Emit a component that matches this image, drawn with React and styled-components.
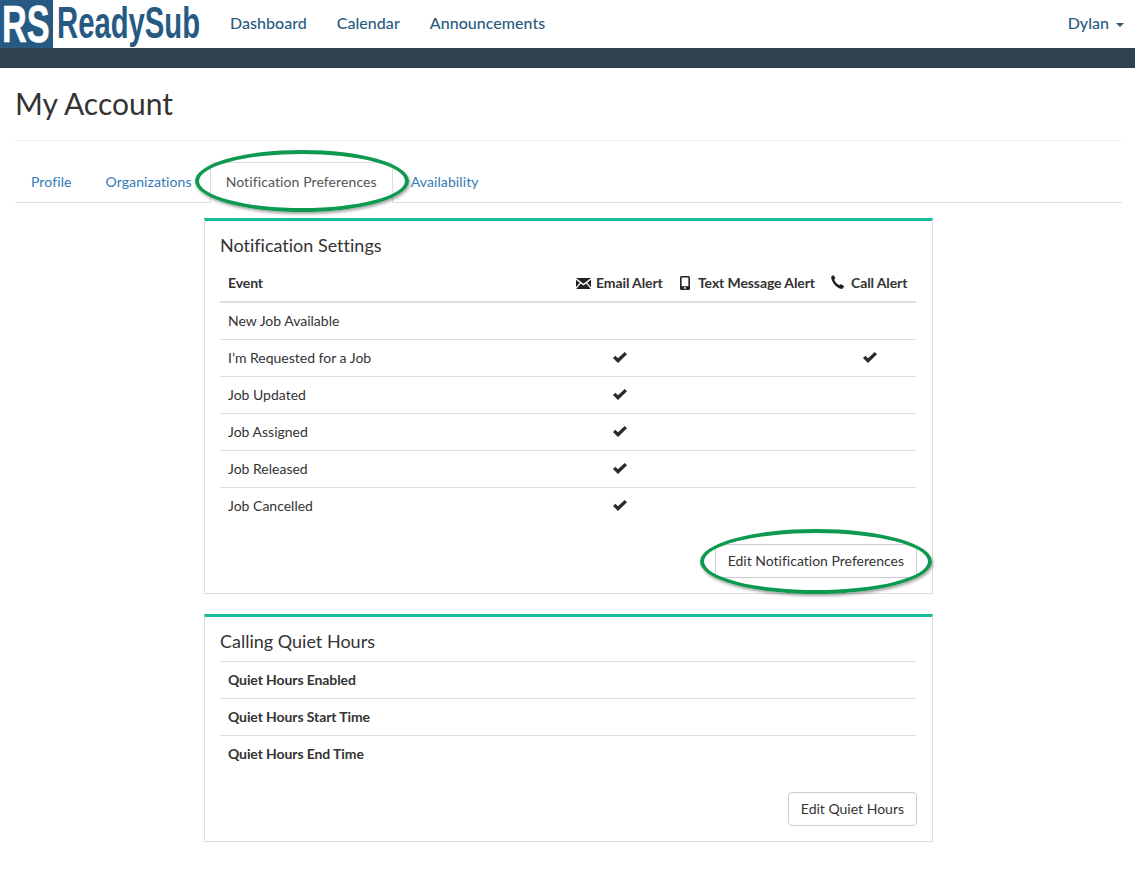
import React from "react";
import styled, { createGlobalStyle } from "styled-components";

const Global = createGlobalStyle`
  html, body { margin: 0; padding: 0; background: #fff; }
  body { font-family: Lato, "Open Sans", sans-serif; font-size: 14px; line-height: 20px; color: #333; font-variant-ligatures: none; }
  * { box-sizing: border-box; }
`;

const Nav = styled.nav`
  height: 48px; background: #fff; display: flex; align-items: center; padding-right: 11px;
`;
const Brand = styled.div`
  display: flex; height: 48px; flex: 0 0 230px; align-items: stretch;
`;
const BrandBox = styled.div`
  flex: 0 0 53px; height: 48px; background: #275a82; display: flex; align-items: center; justify-content: flex-start;
`;
const BrandInitials = styled.span`
  flex: none; margin: 0 -22px 0 2px; font-family: "Liberation Sans", sans-serif; font-weight: 700; white-space: nowrap;
  font-size: 52px; line-height: 48px; color: #fff; -webkit-text-stroke: 0.6px #fff; transform: scaleX(0.66); transform-origin: left center;
`;
const BrandName = styled.span`
  display: block; flex: none; margin: 0 -72px 0 4px; font-family: "Liberation Sans", sans-serif; font-weight: 700; white-space: nowrap;
  font-size: 44px; line-height: 46px; color: #275a82; transform: scaleX(0.665); transform-origin: left center;
`;
const NavLinks = styled.div`
  display: flex; gap: 30px; flex: 1;
`;
const NavLink = styled.a`
  font-size: 16px; font-weight: 500; color: #2a5b7f; line-height: 44px; padding-bottom: 2px; letter-spacing: 0.03px;
`;
const Caret = styled.span`
  display: inline-block; width: 0; height: 0; margin-left: 7px; vertical-align: middle;
  border-top: 4px solid #2a5b7f; border-left: 4px solid transparent; border-right: 4px solid transparent;
`;
const Strip = styled.div`
  height: 20px; background: #2f4050;
`;
const Main = styled.main`
  padding: 0 13px 0 15px; background: #fff; min-height: 802px;
`;
const Title = styled.h1`
  margin: 0; padding: 19px 0 0; height: 73px; font-size: 30px; line-height: 33px; font-weight: 400; color: #333;
  border-bottom: 1px solid #eee;
`;
const Tabs = styled.ul`
  list-style: none; margin: 21px 0 15px; padding: 0; display: flex; height: 41px; border-bottom: 1px solid #ddd;
  letter-spacing: 0.1px;
`;
const Tab = styled.li`
  margin-right: 2px; height: 41px; padding: 9px 15px 11px; position: relative;
  border: 1px solid ${p => (p.$active ? "#ddd" : "transparent")};
  border-bottom-color: ${p => (p.$active ? "#fff" : "transparent")};
  color: ${p => (p.$active ? "#555" : "#337ab7")};
  border-radius: 4px 4px 0 0; white-space: nowrap;
`;
const Oval = styled.span`
  position: absolute; border: 4px solid #0d9a50; border-radius: 50%;
  box-shadow: 1px 2px 3px rgba(0,0,0,.35); pointer-events: none;
`;
const TabOval = styled(Oval)`
  left: -16px; top: -13px; width: 214px; height: 62px;
`;
const ButtonOval = styled(Oval)`
  left: -16px; top: -16px; width: 232px; height: 65px;
`;
const Column = styled.div`
  width: 729px; margin-left: 189px; display: flex; flex-direction: column; gap: 20px;
`;
const Panel = styled.section`
  border: 1px solid #ddd; border-top: 3px solid #18bc9c; padding: 0 15px; background: #fff;
  height: ${p => p.$h}px;
`;
const PanelTitle = styled.h3`
  margin: 0; padding: ${p => p.$top}px 0 0; height: ${p => p.$h}px; font-size: 18px; line-height: 20px; font-weight: 400; color: #333;
`;
const Table = styled.table`
  width: 696px; border-collapse: collapse; table-layout: fixed;
`;
const Th = styled.th`
  padding: 9px 8px 8px; height: 38px; font-weight: 700; font-size: 14px; text-align: left; white-space: nowrap; border-bottom: 2px solid #ddd;
  letter-spacing: -0.1px;
`;
const Td = styled.td`
  height: 37px; padding: 8px; border-top: ${p => (p.$first ? "0" : "1px solid #ddd")}; text-align: ${p => (p.$center ? "center" : "left")};
  font-weight: ${p => (p.$bold ? 700 : 400)}; letter-spacing: ${p => (p.$bold ? "-0.1px" : "0")}; white-space: nowrap; color: #333;
`;
const Actions = styled.div`
  display: flex; justify-content: flex-end; margin-top: ${p => p.$top}px;
`;
const Button = styled.button`
  position: relative; height: 34px; padding: 6px 12px; font: 400 14px/20px Lato, sans-serif; color: #333; background: #fff;
  border: 1px solid #ccc; border-radius: 4px; white-space: nowrap; font-variant-ligatures: none;
`;
const HeadIcon = styled.svg`
  vertical-align: ${p => p.$drop || -1}px; margin-left: ${p => p.$ml || 0}px; margin-right: ${p => p.$mr}px;
`;
const CheckIcon = styled.svg`
  display: inline-block; vertical-align: 0;
`;

const Mail = () => (
  <HeadIcon $mr={5} width="15" height="11" viewBox="0 0 15 11" fill="#222">
    <path d="M0 0h15L7.500 5.800zM0 1.800v7.400l3.800-4.500zM15 1.800v7.400l-3.800-4.500zM4.800 5.500l2.700 2.100 2.700-2.100 4.600 5.500H.2z" />
  </HeadIcon>
);
const Mobile = () => (
  <HeadIcon $ml={1} $mr={8} $drop={-2} width="10" height="14" viewBox="0 0 10 14" fill="#222">
    <path fillRule="evenodd" d="M1.500 0h7A1.500 1.500 0 0 1 10 1.500v11A1.500 1.500 0 0 1 8.500 14h-7A1.500 1.500 0 0 1 0 12.500v-11A1.500 1.500 0 0 1 1.500 0zm.1 1.600v8.600h6.800V1.600zM4 11.200v1.600h2v-1.600z" />
  </HeadIcon>
);
const Phone = () => (
  <HeadIcon $mr={5} width="15" height="14" viewBox="0 0 15 14" fill="#222">
    <path d="M.6 1.300 2.500 0l2 3.300-1.300 1.100c.8 2.500 2.900 4.700 5.500 5.900l1.200-1.300 3.300 2.200-1.200 2c-.5.600-1.400.9-2.200.6C5.200 12.400 1.700 8.600.3 3.200.1 2.500.2 1.800.6 1.300z" />
  </HeadIcon>
);
const Check = () => (
  <CheckIcon width="14" height="11" viewBox="0 0 14 11" fill="#2b2b2b">
    <path d="M0 6l2.300-2.300L5 6.300 11.700 0 14 2.300 5 11z" />
  </CheckIcon>
);

const events = [
  ["New Job Available", false, false],
  ["I’m Requested for a Job", true, true],
  ["Job Updated", true, false],
  ["Job Assigned", true, false],
  ["Job Released", true, false],
  ["Job Cancelled", true, false],
];
const quiet = ["Quiet Hours Enabled", "Quiet Hours Start Time", "Quiet Hours End Time"];

export default function App() {
  return (
    <>
      <Global />
      <Nav>
        <Brand>
          <BrandBox><BrandInitials>RS</BrandInitials></BrandBox>
          <BrandName>ReadySub</BrandName>
        </Brand>
        <NavLinks>
          <NavLink>Dashboard</NavLink>
          <NavLink>Calendar</NavLink>
          <NavLink>Announcements</NavLink>
        </NavLinks>
        <NavLink>Dylan<Caret /></NavLink>
      </Nav>
      <Strip />
      <Main>
        <Title>My Account</Title>
        <Tabs>
          <Tab>Profile</Tab>
          <Tab>Organizations</Tab>
          <Tab $active>Notification Preferences<TabOval /></Tab>
          <Tab>Availability</Tab>
        </Tabs>
        <Column>
          <Panel $h={376}>
            <PanelTitle $top={14} $h={43}>Notification Settings</PanelTitle>
            <Table>
              <colgroup>
                <col style={{ width: 348 }} /><col style={{ width: 103 }} /><col style={{ width: 152 }} /><col style={{ width: 93 }} />
              </colgroup>
              <thead>
                <tr>
                  <Th>Event</Th>
                  <Th><Mail />Email Alert</Th>
                  <Th><Mobile />Text Message Alert</Th>
                  <Th><Phone />Call Alert</Th>
                </tr>
              </thead>
              <tbody>
                {events.map(([name, email, call], i) => (
                  <tr key={name}>
                    <Td $first={i === 0}>{name}</Td>
                    <Td $first={i === 0} $center>{email && <Check />}</Td>
                    <Td $first={i === 0} />
                    <Td $first={i === 0} $center>{call && <Check />}</Td>
                  </tr>
                ))}
              </tbody>
            </Table>
            <Actions $top={19}>
              <Button>Edit Notification Preferences<ButtonOval /></Button>
            </Actions>
          </Panel>
          <Panel $h={228}>
            <PanelTitle $top={14} $h={44}>Calling Quiet Hours</PanelTitle>
            <Table>
              <tbody>
                {quiet.map(q => (
                  <tr key={q}><Td $bold>{q}</Td></tr>
                ))}
              </tbody>
            </Table>
            <Actions $top={19}>
              <Button>Edit Quiet Hours</Button>
            </Actions>
          </Panel>
        </Column>
      </Main>
    </>
  );
}
